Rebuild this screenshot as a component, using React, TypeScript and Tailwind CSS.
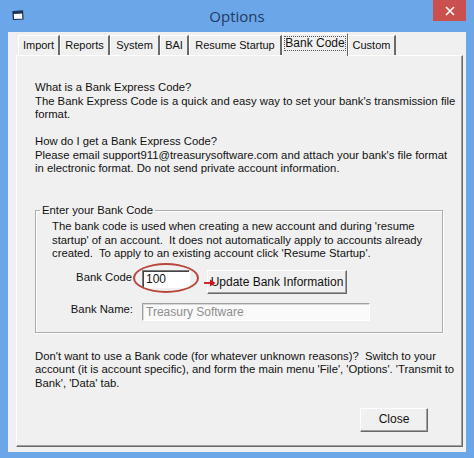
import React from "react"

/*
  Options dialog, "Bank Code" tab.
  Classic Win32 look: 3D borders are done with white / dark borders plus an inset shadow line.
*/

const tabs = [
  { label: "Import", w: "w-[42px]" },
  { label: "Reports", w: "w-[50px]" },
  { label: "System", w: "w-[50px]" },
  { label: "BAI", w: "w-[29px]" },
  { label: "Resume Startup", w: "w-[93px]" },
  { label: "Bank Code", w: "w-[66px]", active: true },
  { label: "Custom", w: "w-[48px]" },
]

function WinIcon() {
  return (
    <svg width="12" height="10" viewBox="0 0 12 10">
      <path d="M1 1.5 L10.5 1 L11 9 L1.5 9.5 Z" fill="#ffffff" stroke="#1d2f57" strokeWidth="1.2" />
      <path d="M1 1.5 L10.5 1 L10.6 3.6 L1.1 4 Z" fill="#1d2f57" />
    </svg>
  )
}

function Button({ children, className }: { children: React.ReactNode; className?: string }) {
  return (
    <div
      className={
        "flex items-center justify-center bg-[#f0f0f0] border-t border-l border-white border-r border-b border-r-[#696969] border-b-[#696969] shadow-[inset_-1px_-1px_0_#a0a0a0] text-[12px] " +
        (className ?? "")
      }
    >
      {children}
    </div>
  )
}

export default function App() {
  return (
    <div
      className="w-[474px] h-[458px] bg-[#6ba6e8] flex flex-col text-[#111] text-[11.3px] leading-[13.5px]"
      style={{ fontFamily: '"Liberation Sans", Arial, sans-serif' }}
    >
      {/* title bar */}
      <div className="h-[32px] grid grid-cols-[1fr_auto_1fr]">
        <div className="pl-[12px] pt-[10px]">
          <WinIcon />
        </div>
        <div
          className="pt-[6px] text-[15px] leading-[20px] text-[#1f3a63]"
          style={{ fontFamily: '"Open Sans", "Noto Sans", sans-serif' }}
        >
          Options
        </div>
        <div className="flex justify-end pr-[8px]">
          <div className="w-[33px] h-[21px] bg-[#c9504c] flex items-center justify-center">
            <svg width="10" height="10" viewBox="0 0 10 10">
              <path d="M1 1 L9 9 M9 1 L1 9" stroke="#fff" strokeWidth="1.6" />
            </svg>
          </div>
        </div>
      </div>

      {/* client area */}
      <div className="mx-[8px] h-[420px] bg-[#f0f0f0] flex flex-col pl-[8px] pr-[3px] pb-[5px]">
        {/* tab strip */}
        <div className="flex items-end pl-[2px] pt-[1px] h-[23px] text-[11px]">
          {tabs.map((t) =>
            t.active ? (
              <div
                key={t.label}
                className={`${t.w} h-[23px] -mb-px relative z-10 bg-[#f0f0f0] border-t border-l border-white border-r border-r-[#696969] flex justify-center pt-[2px]`}
              >
                <span className="w-[62px] h-[15px] border border-dotted border-[#555] flex items-center justify-center text-[12px]">
                  {t.label}
                </span>
              </div>
            ) : (
              <div
                key={t.label}
                className={`${t.w} h-[20px] border-t border-l border-white border-r-2 border-r-[#6a6a6a] flex items-center justify-center`}
              >
                {t.label}
              </div>
            )
          )}
        </div>

        {/* tab page */}
        <div className="flex-1 flex flex-col border-t border-l border-white border-r border-b border-r-[#696969] border-b-[#696969] shadow-[inset_-1px_-1px_0_#a0a0a0] pl-[18px] pt-[25px]">
          <div className="whitespace-nowrap">
            What is a Bank Express Code?
            <br />
            The Bank Express Code is a quick and easy way to set your bank's transmission file
            <br />
            format.
            <br />
            <br />
            How do I get a Bank Express Code?
            <br />
            Please email support911@treasurysoftware.com and attach your bank's file format
            <br />
            in electronic format. Do not send private account information.
          </div>

          <fieldset className="mt-[28px] w-[408px] border border-[#acacac] shadow-[1px_1px_0_#fff,inset_1px_1px_0_#fff]">
            <legend className="ml-[4px] px-[2px]">Enter your Bank Code</legend>
            <div className="pl-[16px] pt-[3px] pb-[11px]">
              <div className="whitespace-nowrap">
                The bank code is used when creating a new account and during 'resume
                <br />
                startup' of an account.&nbsp; It does not automatically apply to accounts already
                <br />
                created.&nbsp; To apply to an existing account click 'Resume Startup'.
              </div>

              <div className="relative flex items-start mt-[9px]">
                <div className="w-[80px] text-right pt-[1px]">Bank Code</div>
                <div className="ml-[10px] w-[48px] h-[18px] bg-white border-t border-l border-[#7a7a7a] border-r border-b border-r-white border-b-white shadow-[inset_1px_1px_0_#444] pl-[3px] text-[12px] leading-[17px]">
                  100
                </div>
                <Button className="ml-[17px] w-[140px] h-[24px] pt-[2px]">Update Bank Information</Button>
                {/* annotation: red ellipse + arrow */}
                <div className="absolute left-[81px] -top-[7px] w-[66px] h-[30px] rounded-[50%] border-2 border-[#b8463c]" />
                <svg className="absolute left-[152px] top-[9px]" width="12" height="8" viewBox="0 0 12 8">
                  <path d="M0 4 H7" stroke="#d0101c" strokeWidth="1.8" />
                  <path d="M6 0.5 L11.5 4 L6 7.5 Z" fill="#d0101c" />
                </svg>
              </div>

              <div className="flex items-start mt-[9px]">
                <div className="w-[81px] text-right">Bank Name:</div>
                <div className="ml-[9px] w-[228px] h-[18px] bg-[#fafafa] border-t border-l border-[#a0a0a0] border-r border-b border-r-white border-b-white shadow-[inset_1px_1px_0_#d8d8d8] pl-[3px] text-[12px] leading-[17px] text-[#8e8e8e]">
                  Treasury Software
                </div>
              </div>
            </div>
          </fieldset>

          <div className="mt-[17px] whitespace-nowrap">
            Don't want to use a Bank code (for whatever unknown reasons)?&nbsp; Switch to your
            <br />
            account (it is account specific), and form the main menu 'File', 'Options'. 'Transmit to
            <br />
            Bank', 'Data' tab.
          </div>

          <Button className="self-end mr-[34px] mt-[18px] w-[68px] h-[24px]">Close</Button>
        </div>
      </div>
    </div>
  )
}
